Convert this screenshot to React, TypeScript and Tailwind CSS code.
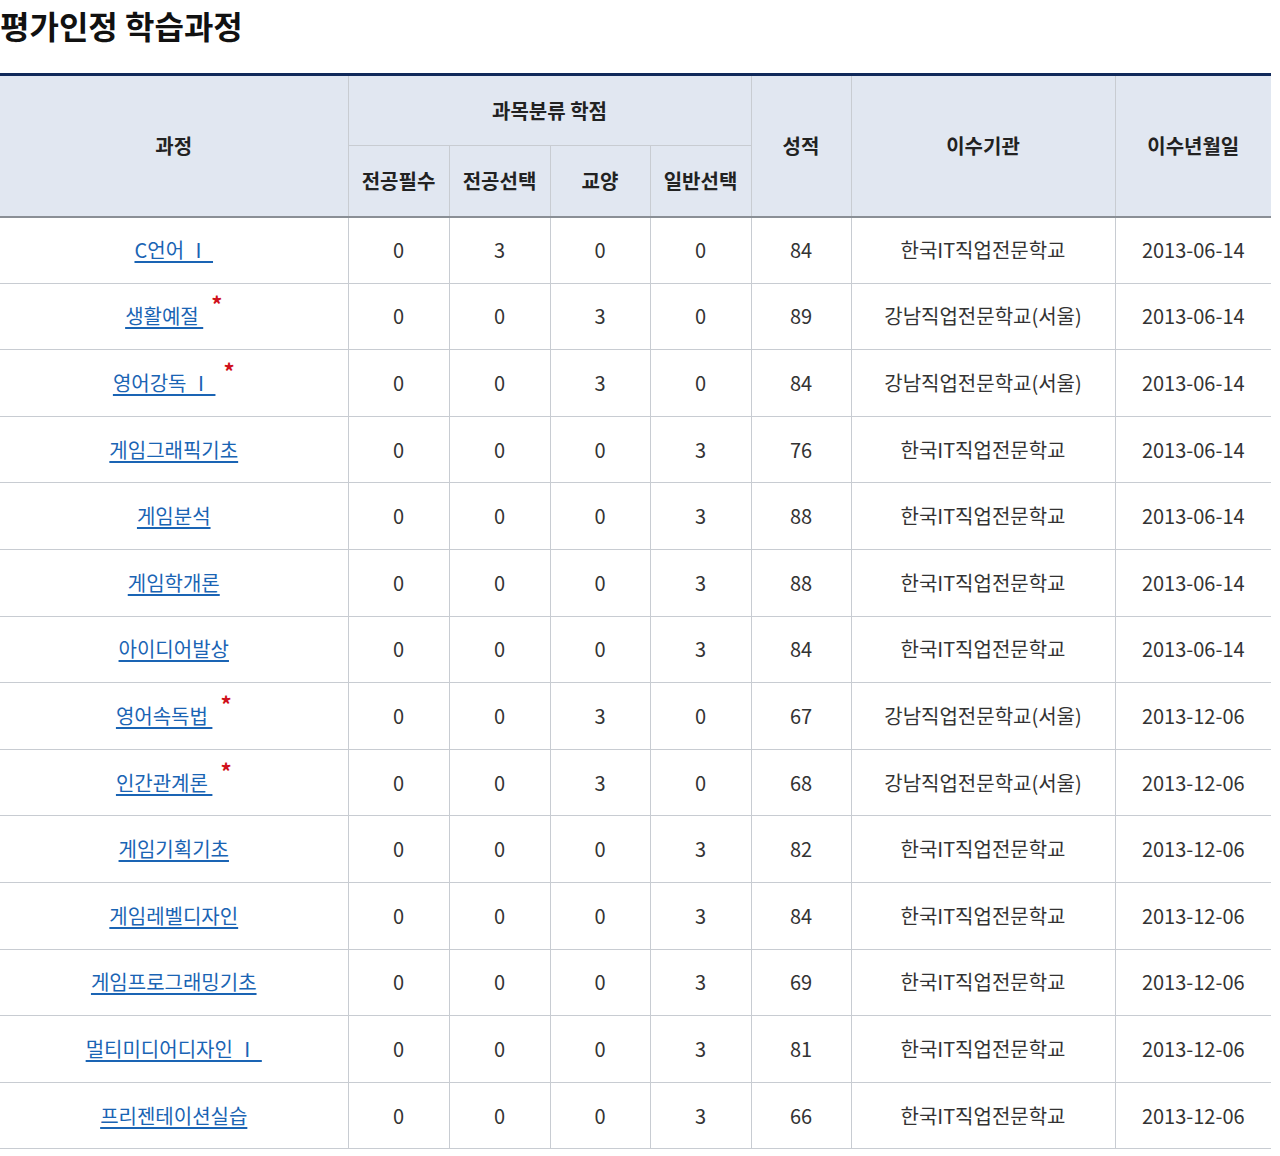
const rows: [string, boolean, number[], string, string, string][] = [
  ["C언어 Ⅰ ", false, [0, 3, 0, 0], "84", "한국IT직업전문학교", "2013-06-14"],
  ["생활예절 ", true, [0, 0, 3, 0], "89", "강남직업전문학교(서울)", "2013-06-14"],
  ["영어강독 Ⅰ ", true, [0, 0, 3, 0], "84", "강남직업전문학교(서울)", "2013-06-14"],
  ["게임그래픽기초", false, [0, 0, 0, 3], "76", "한국IT직업전문학교", "2013-06-14"],
  ["게임분석", false, [0, 0, 0, 3], "88", "한국IT직업전문학교", "2013-06-14"],
  ["게임학개론", false, [0, 0, 0, 3], "88", "한국IT직업전문학교", "2013-06-14"],
  ["아이디어발상", false, [0, 0, 0, 3], "84", "한국IT직업전문학교", "2013-06-14"],
  ["영어속독법 ", true, [0, 0, 3, 0], "67", "강남직업전문학교(서울)", "2013-12-06"],
  ["인간관계론 ", true, [0, 0, 3, 0], "68", "강남직업전문학교(서울)", "2013-12-06"],
  ["게임기획기초", false, [0, 0, 0, 3], "82", "한국IT직업전문학교", "2013-12-06"],
  ["게임레벨디자인", false, [0, 0, 0, 3], "84", "한국IT직업전문학교", "2013-12-06"],
  ["게임프로그래밍기초", false, [0, 0, 0, 3], "69", "한국IT직업전문학교", "2013-12-06"],
  ["멀티미디어디자인 Ⅰ ", false, [0, 0, 0, 3], "81", "한국IT직업전문학교", "2013-12-06"],
  ["프리젠테이션실습", false, [0, 0, 0, 3], "66", "한국IT직업전문학교", "2013-12-06"],
];

const th = "border border-[#c8ccd2] font-bold text-[20px] text-[#222]";

export default function App() {
  return (
    <div className="w-[1280px] bg-white text-[#333]" style={{ fontFamily: '"Noto Sans CJK KR", "Noto Sans", sans-serif' }}>
      <h1 className="h-[52px] text-[32px] font-bold leading-[52px] text-[#111] -mt-[1px]">평가인정 학습과정</h1>
      <table className="mt-[22px] w-[1271px] table-fixed border-collapse border-t-[3px] border-t-[#10295a]">
        <colgroup>
          <col className="w-[348px]" />
          <col className="w-[101px]" />
          <col className="w-[101px]" />
          <col className="w-[100px]" />
          <col className="w-[101px]" />
          <col className="w-[100px]" />
          <col className="w-[264px]" />
          <col className="w-[156px]" />
        </colgroup>
        <thead className="bg-[#e1e7f1] border-b-2 border-b-[#8a8f96]">
          <tr className="h-[71px]">
            <th rowSpan={2} className={th + " border-l-0"}>과정</th>
            <th colSpan={4} className={th}>과목분류 학점</th>
            <th rowSpan={2} className={th}>성적</th>
            <th rowSpan={2} className={th}>이수기관</th>
            <th rowSpan={2} className={th + " border-r-0"}>이수년월일</th>
          </tr>
          <tr className="h-[71px]">
            {["전공필수", "전공선택", "교양", "일반선택"].map((h) => (
              <th key={h} className={th}>{h}</th>
            ))}
          </tr>
        </thead>
        <tbody>
          {rows.map(([name, star, cr, score, org, date]) => (
            <tr key={name} className="h-[66.6px] text-[20px] text-center">
              <td className="border border-[#c8ccd2] border-l-0">
                <a href="#" className="text-[#1a64b4] underline underline-offset-[3px] whitespace-pre">{name}</a>
                {star && <sup className="ml-[8px] text-[22px] text-[#d0111b] font-bold">*</sup>}
              </td>
              {cr.map((c, i) => (
                <td key={i} className="border border-[#c8ccd2]">{c}</td>
              ))}
              <td className="border border-[#c8ccd2]">{score}</td>
              <td className="border border-[#c8ccd2]">{org}</td>
              <td className="border border-[#c8ccd2] border-r-0">{date}</td>
            </tr>
          ))}
        </tbody>
      </table>
    </div>
  );
}
